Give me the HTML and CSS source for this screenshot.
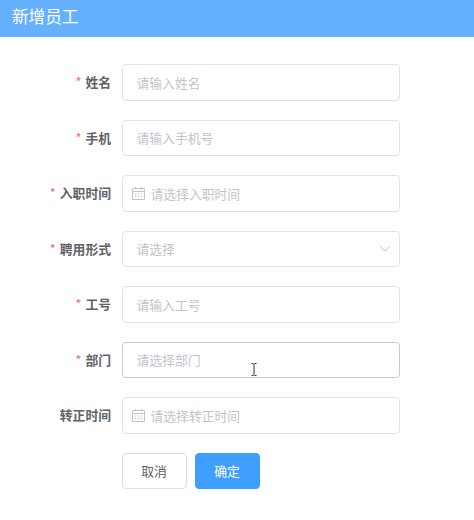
FILE: index.html
```html
<!DOCTYPE html>
<html lang="zh-CN">

<head>
    <meta charset="UTF-8">
    <title>新增员工</title>
    <link rel="stylesheet" href="styles.css">
</head>

<body>
    <div class="dialog">
        <header class="dialog-header">新增员工</header>

        <form class="form">
            <div class="form-item required">
                <label for="name">姓名</label>
                <div class="input-box">
                    <input type="text" id="name" placeholder="请输入姓名">
                </div>
            </div>

            <div class="form-item required">
                <label for="mobile">手机</label>
                <div class="input-box">
                    <input type="text" id="mobile" placeholder="请输入手机号">
                </div>
            </div>

            <div class="form-item required">
                <label for="entryTime">入职时间</label>
                <div class="input-box date">
                    <svg class="icon-date" viewBox="0 0 13 13">
                        <path d="M.5 1.5h12v11H.5zM.5 4.5h12M3.5 0v2.5M9.5 0v2.5M3 7h1.5M5.8 7h1.5M8.6 7h1.5M3 9.5h1.5M5.8 9.5h1.5M8.6 9.5h1.5" />
                    </svg>
                    <input type="text" id="entryTime" placeholder="请选择入职时间">
                </div>
            </div>

            <div class="form-item required">
                <label for="hireType">聘用形式</label>
                <div class="input-box">
                    <input type="text" id="hireType" placeholder="请选择" readonly>
                    <svg class="icon-arrow" viewBox="0 0 10 6">
                        <path d="M.5.5 5 5 9.5.5" />
                    </svg>
                </div>
            </div>

            <div class="form-item required">
                <label for="workNumber">工号</label>
                <div class="input-box">
                    <input type="text" id="workNumber" placeholder="请输入工号">
                </div>
            </div>

            <div class="form-item required">
                <label for="department">部门</label>
                <div class="input-box hover">
                    <input type="text" id="department" placeholder="请选择部门">
                    <svg class="cursor" viewBox="0 0 6 13">
                        <path d="M.5.5h2M3.5.5h2M3 1v11M.5 12.5h2M3.5 12.5h2" />
                    </svg>
                </div>
            </div>

            <div class="form-item">
                <label for="formalTime">转正时间</label>
                <div class="input-box date">
                    <svg class="icon-date" viewBox="0 0 13 13">
                        <path d="M.5 1.5h12v11H.5zM.5 4.5h12M3.5 0v2.5M9.5 0v2.5M3 7h1.5M5.8 7h1.5M8.6 7h1.5M3 9.5h1.5M5.8 9.5h1.5M8.6 9.5h1.5" />
                    </svg>
                    <input type="text" id="formalTime" placeholder="请选择转正时间">
                </div>
            </div>

            <div class="form-buttons">
                <button type="button" class="btn">取消</button>
                <button type="button" class="btn btn-primary">确定</button>
            </div>
        </form>
    </div>
</body>

</html>
```

FILE: styles.css
```css
* {
    box-sizing: border-box;
}

body {
    margin: 0;
    background-color: #fff;
    font-family: "Noto Sans CJK SC", sans-serif;
    font-size: 12.8px;
    color: #606266;
}

.dialog-header {
    height: 37px;
    padding-left: 12px;
    background-color: #66b1ff;
    color: #fff;
    font-size: 16.6px;
    line-height: 33px;
}

.form {
    display: flex;
    flex-direction: column;
    gap: 19px;
    width: 400px;
    padding-top: 27.4px;
}

.form-item {
    display: flex;
    height: 36.5px;
}

.form-item label {
    width: 122px;
    padding-right: 11px;
    text-align: right;
    font-weight: 700;
    line-height: 35px;
}

.form-item.required label::before {
    content: "*";
    margin-right: 4px;
    color: #f56c6c;
    font-weight: 400;
}

.input-box {
    position: relative;
    display: flex;
    flex: 1;
    align-items: center;
    padding: 0 9px 0 13.5px;
    border: 1px solid #e0e2e7;
    border-radius: 4px;
}

.input-box.hover {
    border-color: #c8cacf;
}

.input-box.date {
    gap: 5.5px;
    padding-left: 9px;
}

.input-box input {
    flex: 1;
    min-width: 0;
    height: 34px;
    padding: 0 0 1px;
    border: none;
    outline: none;
    background: none;
    font: inherit;
    color: #606266;
}

.input-box input::placeholder {
    color: #c0c4cc;
    opacity: 1;
}

.icon-date,
.icon-arrow,
.cursor {
    fill: none;
    stroke: #c0c4cc;
}

.icon-date {
    width: 13px;
    height: 13px;
}

.icon-arrow {
    width: 10px;
    height: 6px;
}

.cursor {
    position: absolute;
    top: 20px;
    left: 127.5px;
    width: 6px;
    height: 13px;
    stroke: #333;
}

.form-buttons {
    display: flex;
    gap: 8px;
    padding-left: 122px;
}

.btn {
    width: 65px;
    height: 36.5px;
    padding: 0 1px 1px 0;
    border: 1px solid #dcdfe6;
    border-radius: 4px;
    background-color: #fff;
    font: inherit;
    color: #606266;
}

.btn-primary {
    border-color: #409eff;
    background-color: #409eff;
    color: #fff;
}
```
